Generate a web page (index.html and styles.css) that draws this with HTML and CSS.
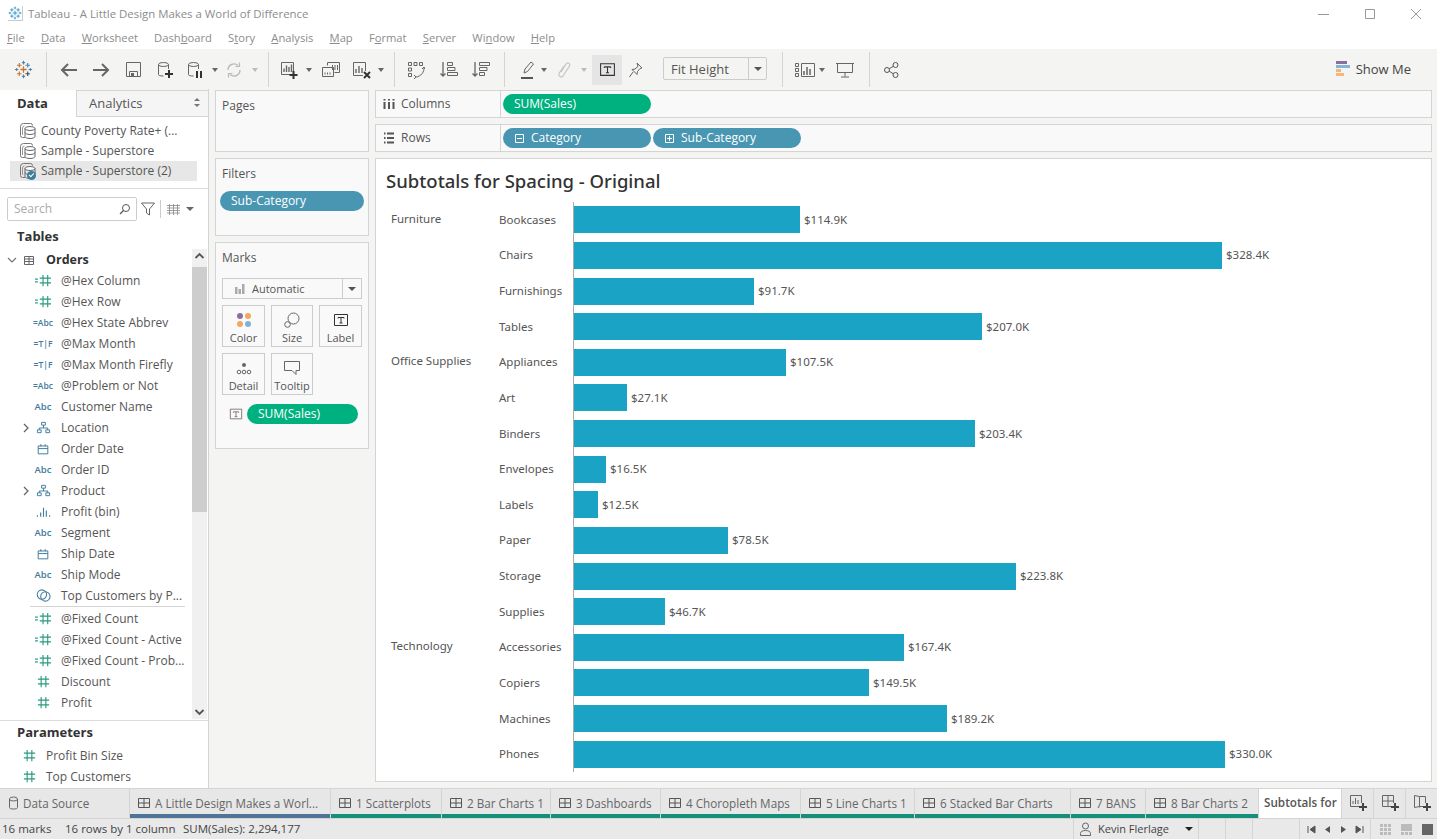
FILE: index.html
```html
<!DOCTYPE html>
<html lang="en">
<head>
<meta charset="utf-8">
<title>Tableau - A Little Design Makes a World of Difference</title>
<link rel="stylesheet" href="styles.css">
</head>
<body>
<svg class="sprite" xmlns="http://www.w3.org/2000/svg">
  <symbol id="hash" viewBox="0 0 16 16"><path d="M5.500 2v12M10.500 2v12M2 5.500h12M2 10.500h12" fill="none" stroke="#2a9a80" stroke-width="1.200"/></symbol>
  <symbol id="eqhash" viewBox="0 0 20 16"><path d="M9.500 2v12M14.500 2v12M6 5.500h12M6 10.500h12M1 6.500h3M1 9.500h3" fill="none" stroke="#2a9a80" stroke-width="1.200"/></symbol>
  <symbol id="cal" viewBox="0 0 16 16"><path d="M2.500 4.500h11v9h-11zM2.500 7.500h11M5.500 2.500v2.500M10.500 2.500v2.500" fill="none" stroke="#3e7a9b" stroke-width="1.100"/></symbol>
  <symbol id="hier" viewBox="0 0 16 16"><path d="M6 2.500h4v3H6zM1.500 10.500h4v3h-4zM10.500 10.500h4v3h-4zM8 5.500v3M3.500 10.500v-2h9v2" fill="none" stroke="#3e7a9b" stroke-width="1"/></symbol>
  <symbol id="bins" viewBox="0 0 16 16"><path d="M1.500 12v1.500M5 9v4.500M8 4v9.500M11 7v6.500M14.500 12v1.500" fill="none" stroke="#3e7a9b" stroke-width="1.200"/></symbol>
  <symbol id="set" viewBox="0 0 16 16"><circle cx="6.300" cy="7" r="5" fill="none" stroke="#3e7a9b" stroke-width="1.100"/><circle cx="10" cy="9" r="5" fill="none" stroke="#3e7a9b" stroke-width="1.100"/></symbol>
  <symbol id="chev" viewBox="0 0 8 10"><path d="M2 1l4 4-4 4" fill="none" stroke="#666" stroke-width="1.300"/></symbol>
  <symbol id="ds" viewBox="0 0 18 18"><path d="M6 15.500H3.500a2 2 0 01-2-2v-9a3 3 0 013-3h7a2 2 0 012 2" fill="none" stroke="#777"/><path d="M3.500 13V6a2 2 0 012-2" fill="none" stroke="#999"/><ellipse cx="11" cy="6.500" rx="5" ry="2" fill="#fff" stroke="#666"/><path d="M6 6.500v8c0 1 2 2 5 2s5-1 5-2v-8M6 10.500c0 1 2 2 5 2s5-1 5-2" fill="none" stroke="#666"/></symbol>
  <symbol id="tabg" viewBox="0 0 14 14"><path d="M1.500 2.500h11v9h-11zM7 2.500v9M1.500 7h11" fill="none" stroke="#555" stroke-width="1"/></symbol>
  <symbol id="logo" viewBox="0 0 18 18">
    <path d="M9 6v6M6 9h6" fill="none" stroke-width="1.200" stroke="var(--a)"/>
    <path d="M9 .8v3.400M7.500 2.500h3M9 13.800v3.400M7.500 15.500h3M.8 9h3.400M2.500 7.500v3M13.800 9h3.400M15.500 7.500v3" fill="none" stroke-width="1" stroke="var(--b)"/>
    <path d="M5 2.800v4.400M2.800 5h4.400" fill="none" stroke-width="1.100" stroke="var(--c)"/>
    <path d="M13 2.800v4.400M10.800 5h4.400" fill="none" stroke-width="1.100" stroke="var(--d)"/>
    <path d="M5 10.800v4.400M2.800 13h4.400" fill="none" stroke-width="1.100" stroke="var(--e)"/>
    <path d="M13 10.800v4.400M10.800 13h4.400" fill="none" stroke-width="1.100" stroke="var(--f)"/>
  </symbol>
  <symbol id="tbox" viewBox="0 0 16 16"><path d="M1.500 2.500h13v11h-13z" fill="none" stroke="currentColor"/><path d="M5 5.500h6M8 5.500v5.500M6.500 11h3M5 5.500v1M11 5.500v1" fill="none" stroke="currentColor"/></symbol>
</svg>

<header class="titlebar">
  <svg class="app-logo" width="15" height="15"><use href="#logo"/></svg>
  <span class="app-title">Tableau - A Little Design Makes a World of Difference</span>
  <div class="winctl">
    <svg width="12" height="12" viewBox="0 0 12 12"><path d="M0 6.500h11" stroke="#999"/></svg>
    <svg width="12" height="12" viewBox="0 0 12 12"><path d="M1.500 1.500h9v9h-9z" fill="none" stroke="#999"/></svg>
    <svg width="12" height="12" viewBox="0 0 12 12"><path d="M1 1l10 10M11 1L1 11" stroke="#999"/></svg>
  </div>
</header>

<nav class="menubar">
  <span><u>F</u>ile</span><span><u>D</u>ata</span><span><u>W</u>orksheet</span><span>Dash<u>b</u>oard</span><span>S<u>t</u>ory</span><span><u>A</u>nalysis</span><span><u>M</u>ap</span><span>F<u>o</u>rmat</span><span><u>S</u>erver</span><span>Wi<u>n</u>dow</span><span><u>H</u>elp</span>
</nav>

<div class="toolbar">
  <div class="tg g0"><div class="c w46"><svg class="color-logo" width="19" height="19"><use href="#logo"/></svg></div></div>
  <div class="tg g1">
    <div class="c w32"><svg width="18" height="16" viewBox="0 0 18 16"><path d="M17 8H2M8 2L2 8l6 6" fill="none" stroke="#666" stroke-width="2"/></svg></div>
    <div class="c w32"><svg width="18" height="16" viewBox="0 0 18 16"><path d="M1 8h15M10 2l6 6-6 6" fill="none" stroke="#666" stroke-width="2"/></svg></div>
    <div class="c w32"><svg width="17" height="17" viewBox="0 0 17 17"><path d="M1.500 1.500h14v14h-14zM4.500 15.500v-5h8v5" fill="none" stroke="#666"/><path d="M6 12h3v3H6z" fill="#666"/></svg></div>
    <div class="c w32"><svg width="17" height="18" viewBox="0 0 17 18"><path d="M1.500 3.500v10c0 1 1.500 1.500 5 1.500M11.500 3.500V8" fill="none" stroke="#666"/><ellipse cx="6.500" cy="3.500" rx="5" ry="2" fill="none" stroke="#666"/><path d="M12 9v8M8 13h8" stroke="#333" stroke-width="2"/></svg></div>
    <div class="c w28"><svg width="17" height="18" viewBox="0 0 17 18"><path d="M1.500 3.500v10c0 1 1.500 1.500 5 1.500M11.500 3.500V8" fill="none" stroke="#666"/><ellipse cx="6.500" cy="3.500" rx="5" ry="2" fill="none" stroke="#666"/><path d="M10 10v7M14 10v7" stroke="#333" stroke-width="2"/></svg></div>
    <div class="c w12"><i class="caret"></i></div>
    <div class="c w26"><svg width="18" height="18" viewBox="0 0 18 18"><path d="M3 9a6 6 0 0110-4.500M15 9a6 6 0 01-10 4.500" fill="none" stroke="#bbb" stroke-width="1.400"/><path d="M14.500 1.500v4h-4M3.500 16.500v-4h4" fill="none" stroke="#bbb" stroke-width="1.200"/></svg></div>
    <div class="c w16"><i class="caret light"></i></div>
  </div>
  <div class="tg g2">
    <div class="c w32"><svg width="19" height="18" viewBox="0 0 19 18"><path d="M12 13.500H1.500v-12h12V12" fill="none" stroke="#666"/><path d="M4 11V7.500M6.500 11V4.500M9 11V6M11.500 11V3.500" stroke="#666" stroke-width="1.400"/><path d="M13.500 10v8M9.500 14h8" stroke="#333" stroke-width="2"/></svg></div>
    <div class="c w8"><i class="caret"></i></div>
    <div class="c w36"><svg width="18" height="17" viewBox="0 0 18 17"><path d="M5.500 4.500v-3h12v10h-5" fill="none" stroke="#666"/><path d="M.5 6.500h11v9H.5z" fill="#f4f4f2" stroke="#666"/><path d="M3 13.500v-2M5.500 13.500v-2M8 13.500v-2M10.500 9V4M13 9V4M15.500 9V4" stroke="#666"/></svg></div>
    <div class="c w26"><svg width="20" height="18" viewBox="0 0 20 18"><path d="M11 14.500H1.500v-13h12V10" fill="none" stroke="#666"/><path d="M4 12V8M7 12V5M10 12V7" stroke="#666" stroke-width="1.400"/><path d="M12 11l6 6M18 11l-6 6" stroke="#333" stroke-width="2"/></svg></div>
    <div class="c w12"><i class="caret"></i></div>
  </div>
  <div class="tg g3">
    <div class="c w32"><svg width="18" height="18" viewBox="0 0 18 18"><path d="M1.500 1.500h3v3h-3zM7 1.500h3v3H7zM12.500 1.500h3v3h-3zM1.500 7h3v3h-3zM1.500 12.500h3v3h-3z" fill="none" stroke="#666"/><path d="M17 6c.5 5-3 9.500-8 10M7 14l2 2-2 2M15 8l2-2 1 2" fill="none" stroke="#666"/></svg></div>
    <div class="c w34"><svg width="18" height="17" viewBox="0 0 18 17"><path d="M3 1v14M.5 12.500L3 15l2.500-2.500" fill="none" stroke="#666" stroke-width="1.300"/><path d="M7.500 1.500h5v3h-5zM7.500 6.500H15v3H7.500zM7.500 11.500h10v3h-10z" fill="none" stroke="#666"/></svg></div>
    <div class="c w30"><svg width="18" height="17" viewBox="0 0 18 17"><path d="M3 1v14M.5 12.500L3 15l2.500-2.500" fill="none" stroke="#666" stroke-width="1.300"/><path d="M7.500 1.500h10v3h-10zM7.500 6.500H15v3H7.500zM7.500 11.500h5v3h-5z" fill="none" stroke="#666"/></svg></div>
  </div>
  <div class="tg g4">
    <div class="c w26"><svg width="13" height="18" viewBox="0 0 13 18"><path d="M3 12l1-4 6-7 2.500 2-6 7.500z" fill="none" stroke="#666"/><path d="M0 17h12" stroke="#555" stroke-width="2"/></svg></div>
    <div class="c w8"><i class="caret"></i></div>
    <div class="c w32"><svg width="13" height="18" viewBox="0 0 13 18"><path d="M3 11l5-8a2 2 0 013.500 2l-6.500 10a2.400 2.400 0 01-4-2.500L6 5" fill="none" stroke="#c4c4c4" stroke-width="1.200"/></svg></div>
    <div class="c w8"><i class="caret light"></i></div>
    <div class="c w30 sel gapl"><svg class="t-ink" width="17" height="17"><use href="#tbox"/></svg></div>
    <div class="c w28"><svg width="14" height="16" viewBox="0 0 14 16"><path d="M8 1l5 5-2 .5-2.500 3-.5 3-5-5 3-.5 3-2.500zM4 10L.5 15" fill="none" stroke="#666"/></svg></div>
    <div class="fit"><span class="fit-label">Fit Height</span><span class="fit-btn"><i class="caret dark"></i></span></div>
  </div>
  <div class="tg g5">
    <div class="c w24"><svg width="20" height="16" viewBox="0 0 20 16"><path d="M.5 1.500h3v3h-3zM.5 6.500h3v3h-3zM.5 11.500h3v3h-3zM6.500 1.500h13v13h-13z" fill="none" stroke="#666"/><path d="M9 13V9M12 13V5M15 13V7" stroke="#666" stroke-width="1.500"/></svg></div>
    <div class="c w10"><i class="caret"></i></div>
    <div class="c w35"><svg width="18" height="16" viewBox="0 0 18 16"><path d="M0 1.500h18M1.500 1.500v9h15v-9M9 10.500v4M5 15h8" fill="none" stroke="#666"/></svg></div>
  </div>
  <div class="tg g6">
    <div class="c w42"><svg width="15" height="16" viewBox="0 0 15 16"><circle cx="3" cy="8" r="2.500" fill="none" stroke="#555"/><circle cx="11.500" cy="3" r="2.500" fill="none" stroke="#555"/><circle cx="11.500" cy="13" r="2.500" fill="none" stroke="#555"/><path d="M5.200 6.800l4-2.500M5.200 9.200l4 2.500" stroke="#555"/></svg></div>
  </div>
  <div class="showme">
    <svg width="14" height="15" viewBox="0 0 14 15"><path d="M0 0h11v3H0z" fill="#8a6f9e"/><path d="M0 4h14v3H0z" fill="#86b3d9"/><path d="M0 8h5v3H0z" fill="#f5b67a"/><path d="M0 12h8v3H0z" fill="#f5b67a"/></svg>
    <span>Show Me</span>
  </div>
</div>

<main class="main">
  <aside class="left">
    <div class="left-tabs"><div class="ltab on">Data</div><div class="ltab"><span>Analytics</span><i class="updown"></i></div></div>
    <div class="sources">
      <div class="src"><svg width="18" height="18"><use href="#ds"/></svg><span>County Poverty Rate+ (...</span></div>
      <div class="src"><svg width="18" height="18"><use href="#ds"/></svg><span>Sample - Superstore</span></div>
      <div class="src active"><svg width="18" height="18"><use href="#ds"/></svg><b class="check"></b><span>Sample - Superstore (2)</span></div>
    </div>
    <div class="searchrow">
      <div class="search"><span>Search</span><svg width="12" height="12" viewBox="0 0 12 12"><circle cx="7" cy="5" r="3.500" fill="none" stroke="#555"/><path d="M4.500 7.500L1 11" stroke="#555" stroke-width="1.300"/></svg></div>
      <svg width="14" height="14" viewBox="0 0 14 14"><path d="M.5 1h13L8.500 7v6l-3-2V7z" fill="none" stroke="#666"/></svg>
      <i class="vsep"></i>
      <svg width="13" height="11" viewBox="0 0 13 11"><path d="M0 1.500h13M0 4h13M0 6.500h13M0 9h13M2.500 0v11M6.500 0v11M10.500 0v11" stroke="#888" stroke-width=".8"/></svg>
      <i class="caret mark"></i>
    </div>
    <div class="heading">Tables</div>
    <div class="fieldwrap">
      <div class="fields">
        <div class="row orders"><svg class="dn" width="10" height="8" viewBox="0 0 10 8"><path d="M1 2l4 4 4-4" fill="none" stroke="#777" stroke-width="1.200"/></svg><svg width="14" height="14" viewBox="0 0 14 14"><path d="M2.500 3.500h9v8h-9zM2.500 6h9M2.500 8.500h9M7 3.500v8" fill="none" stroke="#666"/></svg><span>Orders</span></div>
        <div class="row"><em class="ic"><svg width="19" height="15"><use href="#eqhash"/></svg></em><span>@Hex Column</span></div>
        <div class="row"><em class="ic"><svg width="19" height="15"><use href="#eqhash"/></svg></em><span>@Hex Row</span></div>
        <div class="row"><em class="ic txt tiny">=Abc</em><span>@Hex State Abbrev</span></div>
        <div class="row"><em class="ic txt tiny">=T|F</em><span>@Max Month</span></div>
        <div class="row"><em class="ic txt tiny">=T|F</em><span>@Max Month Firefly</span></div>
        <div class="row"><em class="ic txt tiny">=Abc</em><span>@Problem or Not</span></div>
        <div class="row"><em class="ic txt">Abc</em><span>Customer Name</span></div>
        <div class="row"><svg class="more" width="8" height="10"><use href="#chev"/></svg><em class="ic"><svg width="15" height="15"><use href="#hier"/></svg></em><span>Location</span></div>
        <div class="row"><em class="ic"><svg width="14" height="14"><use href="#cal"/></svg></em><span>Order Date</span></div>
        <div class="row"><em class="ic txt">Abc</em><span>Order ID</span></div>
        <div class="row"><svg class="more" width="8" height="10"><use href="#chev"/></svg><em class="ic"><svg width="15" height="15"><use href="#hier"/></svg></em><span>Product</span></div>
        <div class="row"><em class="ic"><svg width="15" height="15"><use href="#bins"/></svg></em><span>Profit (bin)</span></div>
        <div class="row"><em class="ic txt">Abc</em><span>Segment</span></div>
        <div class="row"><em class="ic"><svg width="14" height="14"><use href="#cal"/></svg></em><span>Ship Date</span></div>
        <div class="row"><em class="ic txt">Abc</em><span>Ship Mode</span></div>
        <div class="row"><em class="ic"><svg width="15" height="15"><use href="#set"/></svg></em><span>Top Customers by P...</span></div>
        <div class="rule"></div>
        <div class="row"><em class="ic"><svg width="19" height="15"><use href="#eqhash"/></svg></em><span>@Fixed Count</span></div>
        <div class="row"><em class="ic"><svg width="19" height="15"><use href="#eqhash"/></svg></em><span>@Fixed Count - Active</span></div>
        <div class="row"><em class="ic"><svg width="19" height="15"><use href="#eqhash"/></svg></em><span>@Fixed Count - Prob...</span></div>
        <div class="row"><em class="ic"><svg width="15" height="15"><use href="#hash"/></svg></em><span>Discount</span></div>
        <div class="row"><em class="ic"><svg width="15" height="15"><use href="#hash"/></svg></em><span>Profit</span></div>
      </div>
      <div class="scroll">
        <svg class="sb-arrow" width="15" height="15" viewBox="0 0 15 15"><path d="M3.500 9l4-4 4 4" fill="none" stroke="#555" stroke-width="1.800"/></svg>
        <div class="thumb"></div>
        <svg class="sb-arrow end" width="15" height="15" viewBox="0 0 15 15"><path d="M3.500 6l4 4 4-4" fill="none" stroke="#555" stroke-width="1.800"/></svg>
      </div>
    </div>
    <div class="params">
      <div class="heading p">Parameters</div>
      <div class="prow"><svg width="15" height="15"><use href="#hash"/></svg><span>Profit Bin Size</span></div>
      <div class="prow"><svg width="15" height="15"><use href="#hash"/></svg><span>Top Customers</span></div>
    </div>
  </aside>

  <section class="cards">
    <div class="card pages"><h3>Pages</h3></div>
    <div class="card filters"><h3>Filters</h3><div class="pill blue wide">Sub-Category</div></div>
    <div class="card marks">
      <h3>Marks</h3>
      <div class="marksel"><svg width="11" height="11" viewBox="0 0 11 11"><path d="M1 4h2.500v7H1zM4.500 6H7v5H4.500zM8 1h2.500v10H8z" fill="#aaa"/></svg><span>Automatic</span><b><i class="caret dark"></i></b></div>
      <div class="markgrid">
        <div class="mbtn"><svg width="16" height="16" viewBox="0 0 16 16"><circle cx="4" cy="4" r="3" fill="#8a6f9e"/><circle cx="12" cy="4" r="3" fill="#f0a860"/><circle cx="4" cy="12" r="3" fill="#f0a860"/><circle cx="12" cy="12" r="3" fill="#7fb0d8"/></svg><span>Color</span></div>
        <div class="mbtn"><svg width="16" height="16" viewBox="0 0 16 16"><circle cx="9.500" cy="6.500" r="5.500" fill="none" stroke="#666"/><circle cx="3.500" cy="12.500" r="2.800" fill="#f9f9f9" stroke="#666"/></svg><span>Size</span></div>
        <div class="mbtn"><svg class="t-ink" width="16" height="16"><use href="#tbox"/></svg><span>Label</span></div>
        <div class="mbtn"><svg width="16" height="16" viewBox="0 0 16 16"><circle cx="8" cy="5" r="2" fill="#666"/><circle cx="3" cy="12" r="1.800" fill="none" stroke="#666"/><circle cx="8" cy="12" r="1.800" fill="none" stroke="#666"/><circle cx="13" cy="12" r="1.800" fill="none" stroke="#666"/></svg><span>Detail</span></div>
        <div class="mbtn"><svg width="16" height="16" viewBox="0 0 16 16"><path d="M.5 1.500h15v9h-3.500v4l-4-4H.5z" fill="none" stroke="#666"/></svg><span>Tooltip</span></div>
      </div>
      <div class="markpill"><svg class="t-ink2" width="14" height="14"><use href="#tbox"/></svg><div class="pill green mp">SUM(Sales)</div></div>
    </div>
  </section>

  <section class="work">
    <div class="shelf"><div class="shelf-label"><svg width="12" height="12" viewBox="0 0 12 12"><path d="M1.500 4v7M6 4v7M10.500 4v7M1.500 1v1.500M6 1v1.500M10.500 1v1.500" stroke="#555" stroke-width="2"/></svg><span>Columns</span></div><div class="shelf-body"><div class="pill green">SUM(Sales)</div></div></div>
    <div class="shelf"><div class="shelf-label"><svg width="12" height="12" viewBox="0 0 12 12"><path d="M4 1.500h7M4 6h7M4 10.500h7M1 1.500h1.500M1 6h1.500M1 10.500h1.500" stroke="#555" stroke-width="2"/></svg><span>Rows</span></div><div class="shelf-body"><div class="pill blue"><svg width="11" height="11" viewBox="0 0 11 11"><path d="M1.500 1.500h8v8h-8zM3 5.500h5" fill="none" stroke="#fff"/></svg><span>Category</span></div><div class="pill blue"><svg width="11" height="11" viewBox="0 0 11 11"><path d="M1.500 1.500h8v8h-8zM3 5.500h5M5.500 3v5" fill="none" stroke="#fff"/></svg><span>Sub-Category</span></div></div></div>
    <div class="view">
      <h1>Subtotals for Spacing - Original</h1>
      <div class="chart">
        <div class="crow"><div class="cat">Furniture</div><div class="sub">Bookcases</div><div class="barcell"><div class="bar" style="width:226px"></div><span>$114.9K</span></div></div>
        <div class="crow"><div class="cat"></div><div class="sub">Chairs</div><div class="barcell"><div class="bar" style="width:648px"></div><span>$328.4K</span></div></div>
        <div class="crow"><div class="cat"></div><div class="sub">Furnishings</div><div class="barcell"><div class="bar" style="width:180px"></div><span>$91.7K</span></div></div>
        <div class="crow"><div class="cat"></div><div class="sub">Tables</div><div class="barcell"><div class="bar" style="width:408px"></div><span>$207.0K</span></div></div>
        <div class="crow"><div class="cat">Office Supplies</div><div class="sub">Appliances</div><div class="barcell"><div class="bar" style="width:212px"></div><span>$107.5K</span></div></div>
        <div class="crow"><div class="cat"></div><div class="sub">Art</div><div class="barcell"><div class="bar" style="width:53px"></div><span>$27.1K</span></div></div>
        <div class="crow"><div class="cat"></div><div class="sub">Binders</div><div class="barcell"><div class="bar" style="width:401px"></div><span>$203.4K</span></div></div>
        <div class="crow"><div class="cat"></div><div class="sub">Envelopes</div><div class="barcell"><div class="bar" style="width:32px"></div><span>$16.5K</span></div></div>
        <div class="crow"><div class="cat"></div><div class="sub">Labels</div><div class="barcell"><div class="bar" style="width:24px"></div><span>$12.5K</span></div></div>
        <div class="crow"><div class="cat"></div><div class="sub">Paper</div><div class="barcell"><div class="bar" style="width:154px"></div><span>$78.5K</span></div></div>
        <div class="crow"><div class="cat"></div><div class="sub">Storage</div><div class="barcell"><div class="bar" style="width:442px"></div><span>$223.8K</span></div></div>
        <div class="crow"><div class="cat"></div><div class="sub">Supplies</div><div class="barcell"><div class="bar" style="width:91px"></div><span>$46.7K</span></div></div>
        <div class="crow"><div class="cat">Technology</div><div class="sub">Accessories</div><div class="barcell"><div class="bar" style="width:330px"></div><span>$167.4K</span></div></div>
        <div class="crow"><div class="cat"></div><div class="sub">Copiers</div><div class="barcell"><div class="bar" style="width:295px"></div><span>$149.5K</span></div></div>
        <div class="crow"><div class="cat"></div><div class="sub">Machines</div><div class="barcell"><div class="bar" style="width:373px"></div><span>$189.2K</span></div></div>
        <div class="crow"><div class="cat"></div><div class="sub">Phones</div><div class="barcell"><div class="bar" style="width:651px"></div><span>$330.0K</span></div></div>
      </div>
    </div>
  </section>
</main>

<div class="tabs">
  <div class="tab ds"><svg width="11" height="14" viewBox="0 0 11 14"><path d="M1.500 3v8.500c0 1 1.500 1.500 4 1.500s4-.5 4-1.500V3" fill="none" stroke="#666"/><ellipse cx="5.500" cy="3" rx="4" ry="2" fill="none" stroke="#666"/></svg><span>Data Source</span></div>
  <div class="tab home"><svg width="14" height="14"><use href="#tabg"/></svg><span>A Little Design Makes a Worl...</span></div>
  <div class="tab g"><svg width="14" height="14"><use href="#tabg"/></svg><span>1 Scatterplots</span></div>
  <div class="tab g"><svg width="14" height="14"><use href="#tabg"/></svg><span>2 Bar Charts 1</span></div>
  <div class="tab g"><svg width="14" height="14"><use href="#tabg"/></svg><span>3 Dashboards</span></div>
  <div class="tab g"><svg width="14" height="14"><use href="#tabg"/></svg><span>4 Choropleth Maps</span></div>
  <div class="tab g"><svg width="14" height="14"><use href="#tabg"/></svg><span>5 Line Charts 1</span></div>
  <div class="tab g"><svg width="14" height="14"><use href="#tabg"/></svg><span>6 Stacked Bar Charts</span></div>
  <div class="tab g"><svg width="14" height="14"><use href="#tabg"/></svg><span>7 BANS</span></div>
  <div class="tab g"><svg width="14" height="14"><use href="#tabg"/></svg><span>8 Bar Charts 2</span></div>
  <div class="tab cur"><span>Subtotals for</span></div>
  <div class="tab add"><svg width="20" height="18" viewBox="0 0 20 18"><path d="M11 12.500H1.500v-11h11V9" fill="none" stroke="#666"/><path d="M4 10V7M6.500 10V4M9 10V6" stroke="#666"/><path d="M14 9v8M10 13h8" stroke="#444" stroke-width="2"/></svg></div>
  <div class="tab add"><svg width="20" height="18" viewBox="0 0 20 18"><path d="M11 12.500H1.500v-11h11V9M7 1.500v11M1.500 7h11" fill="none" stroke="#666"/><path d="M14 9v8M10 13h8" stroke="#444" stroke-width="2"/></svg></div>
  <div class="tab add"><svg width="20" height="18" viewBox="0 0 20 18"><path d="M10 12.500H6.500l-5 1v-12l5 1h6V9M6.500 2.500v11" fill="none" stroke="#666"/><path d="M14 9v8M10 13h8" stroke="#444" stroke-width="2"/></svg></div>
</div>

<footer class="status">
  <span class="s1">16 marks</span><span class="s2">16 rows by 1 column</span><span class="s3">SUM(Sales): 2,294,177</span>
  <div class="user"><svg width="13" height="14" viewBox="0 0 13 14"><circle cx="6.500" cy="4" r="3" fill="none" stroke="#666"/><path d="M1.500 13.500v-2c0-2 2-3 5-3s5 1 5 3v2z" fill="none" stroke="#666"/></svg><span>Kevin Flerlage</span><i class="caret black"></i></div>
  <div class="blank"></div><div class="blank"></div><div class="blank wide"></div>
  <div class="pager">
    <svg width="9" height="9" viewBox="0 0 9 9"><path d="M1 1v7M8 1v7L3 4.500z" fill="#555" stroke="#555"/></svg>
    <svg width="9" height="9" viewBox="0 0 9 9"><path d="M7 1v7L2 4.500z" fill="#555"/></svg>
    <svg width="9" height="9" viewBox="0 0 9 9"><path d="M2 1v7l5-3.500z" fill="#555"/></svg>
    <svg width="9" height="9" viewBox="0 0 9 9"><path d="M8 1v7M1 1v7l5-3.500z" fill="#555" stroke="#555"/></svg>
  </div>
  <div class="sizes">
    <svg width="11" height="11" viewBox="0 0 11 11"><path d="M0 0h3v3H0zM4 0h3v3H4zM8 0h3v3H8zM0 4h3v3H0zM4 4h3v3H4zM8 4h3v3H8zM0 8h3v3H0zM4 8h3v3H4zM8 8h3v3H8z" fill="#bbb"/></svg>
    <svg width="11" height="11" viewBox="0 0 11 11"><path d="M0 0h11v7H0zM0 8h3v3H0zM4 8h3v3H4zM8 8h3v3H8z" fill="#bbb"/></svg>
    <svg width="11" height="11" viewBox="0 0 11 11"><path d="M0 0h11v11H0z" fill="#666"/></svg>
  </div>
</footer>
</body>
</html>
```
FILE: styles.css
```css
* { box-sizing: border-box; }
html, body { margin: 0; padding: 0; }
body {
  width: 1437px; height: 839px; overflow: hidden;
  display: flex; flex-direction: column;
  font: 12px/16px "Open Sans", "Noto Sans", sans-serif;
  color: #555;
  background: #fff;
}
svg { display: block; flex: none; }
em { font-style: normal; }
.sprite { position: absolute; width: 0; height: 0; }

/* title */
.titlebar { height: 27px; flex: none; display: flex; align-items: center; padding-left: 8px; color: #8c8c8c; }
.app-logo { --a: #2f8fc8; --b: #2f8fc8; --c: #2f8fc8; --d: #2f8fc8; --e: #2f8fc8; --f: #2f8fc8; margin-right: 5px; border-right: 1px solid #ccc; border-bottom: 1px solid #ccc; }
.app-title { font-size: 11.400px; }
.winctl { margin-left: auto; display: flex; gap: 34px; padding-right: 15px; }
.menubar { height: 22px; flex: none; display: flex; align-items: center; padding-left: 7px; gap: 16.200px; color: #8c8c8c; font-size: 11.200px; }
.menubar u { text-underline-offset: 1px; }

/* toolbar */
.toolbar { height: 40px; flex: none; background: #f4f4f2; display: flex; align-items: center; padding-top: 1px; }
.tg { display: flex; align-items: center; height: 35px; border-right: 1px solid #d4d4d4; }
.g1 { padding: 0 5px 0 6px; }
.g2 { padding: 0 7px 0 4px; }
.g3 { padding: 0 8px 0 5px; }
.g4 { padding: 0 15px 0 9px; }
.g5 { padding: 0 7px 0 10px; }
.g6 { border-right: 0; }
.c { height: 30px; display: flex; align-items: center; justify-content: center; flex: none; }
.w8 { width: 8px; } .w10 { width: 10px; } .w12 { width: 12px; } .w16 { width: 16px; }
.w24 { width: 24px; } .w26 { width: 26px; } .w28 { width: 28px; } .w30 { width: 30px; }
.w32 { width: 32px; } .w34 { width: 34px; } .w35 { width: 35px; } .w36 { width: 36px; }
.w42 { width: 42px; } .w46 { width: 46px; }
.sel { background: #e5e5e5; }
.gapl { margin-left: 4px; }
.t-ink { color: #333; }
.t-ink2 { color: #7a6a6a; }
.color-logo { --a: #c9752e; --b: #4a86b8; --c: #c9752e; --d: #4a86b8; --e: #c9752e; --f: #3c4f63; }
.caret { display: block; flex: none; width: 0; height: 0; border: 3.500px solid transparent; border-top: 4px solid #666; border-bottom: 0; }
.caret.light { border-top-color: #bbb; }
.caret.dark { border-top-color: #555; border-width: 4px 4px 0; }
.caret.black { border-top-color: #222; border-width: 4.500px 4.500px 0; }
.caret.mark { margin-left: 6px; border-width: 4px 4px 0; }
.fit { margin: -2px 0 0 13px; width: 104px; height: 23px; border: 1px solid #ccc; border-radius: 2px; display: flex; align-items: center; font-size: 13px; color: #555; }
.fit-label { flex: 1; padding-left: 7px; }
.fit-btn { width: 18px; height: 100%; border-left: 1px solid #ccc; display: flex; align-items: center; justify-content: center; }
.showme { margin: -2px 0 0 auto; padding-right: 26px; display: flex; align-items: center; gap: 6px; font-size: 13px; color: #444; }

/* main */
.main { height: 699px; flex: none; display: flex; background: #f4f4f2; }
.left { width: 209px; flex: none; background: #fff; border-right: 1px solid #d4d4d4; display: flex; flex-direction: column; }
.left-tabs { height: 28px; flex: none; display: flex; background: #f4f4f2; padding-top: 1px; }
.ltab { flex: 1; display: flex; align-items: center; padding: 0 0 2px 12px; font-size: 13px; background: #f5f5f5; border: 1px solid #d4d4d4; border-right: 0; color: #555; }
.ltab.on { flex: 0 0 76px; background: #fff; border: 0; font-weight: 700; color: #333; padding-left: 17px; }
.updown { margin-left: auto; margin-right: 11px; width: 0; height: 9px; position: relative; }
.updown::before, .updown::after { content: ""; position: absolute; left: -3px; border: 3px solid transparent; }
.updown::before { top: 0; border-bottom: 3.500px solid #777; border-top: 0; }
.updown::after { bottom: 0; border-top: 3.500px solid #777; border-bottom: 0; }
.sources { height: 72px; flex: none; padding: 4px 11px 0 10px; border-bottom: 1px solid #dcdcdc; }
.src { height: 20px; display: flex; align-items: center; gap: 4px; padding-left: 9px; position: relative; }
.src.active { background: #e6e7e6; }
.check { position: absolute; left: 17px; top: 10px; width: 9px; height: 9px; border-radius: 50%; background: #3b7ea1; }
.check::after { content: ""; position: absolute; left: 2px; top: 2px; width: 4px; height: 2px; border-left: 1px solid #fff; border-bottom: 1px solid #fff; transform: rotate(-45deg); }
.searchrow { height: 36px; flex: none; display: flex; align-items: center; padding-left: 7px; padding-top: 4px; }
.search { width: 130px; height: 24px; border: 1px solid #ccc; border-radius: 2px; display: flex; align-items: center; justify-content: space-between; padding: 0 5px 0 6px; color: #aaa; margin-right: 4px; }
.vsep { width: 1px; height: 18px; background: #ccc; margin: 0 6px 0 5px; }
.heading { height: 24px; flex: none; padding-left: 17px; font-weight: 700; font-size: 13px; color: #333; line-height: 22px; }
.fieldwrap { height: 470px; flex: none; display: flex; }
.fields { flex: 1; min-width: 0; }
.row { height: 21px; display: flex; align-items: center; position: relative; padding-left: 61px; white-space: nowrap; }
.row .ic { position: absolute; left: 31px; width: 24px; height: 21px; display: flex; align-items: center; justify-content: center; }
.row .ic.txt { color: #3e7a9b; font-size: 9.500px; font-weight: 600; }
.row .ic.tiny { font-size: 8.500px; }
.row .more { position: absolute; left: 22px; top: 6px; }
.orders { padding-left: 7px; font-weight: 700; color: #333; font-size: 12.500px; }
.orders .dn { margin-right: 5px; }
.orders svg + svg { margin-right: 10px; }
.rule { height: 1px; margin: 0 7px 1px 30px; background: #d4d4d4; }
.scroll { width: 15px; flex: none; background: #f0f0f0; display: flex; flex-direction: column; margin-right: 1px; }
.thumb { height: 245px; background: #cdcdcd; margin-top: 3px; }
.sb-arrow.end { margin-top: auto; }
.params { flex: 1; border-top: 1px solid #dcdcdc; margin-top: 1px; min-height: 0; }
.heading.p { height: 24px; }
.prow { height: 21px; display: flex; align-items: center; gap: 9px; padding-left: 22px; }

/* cards */
.cards { width: 154px; flex: none; margin: 1px 0 0 6px; display: flex; flex-direction: column; gap: 6px; }
.card { background: #f9f9f9; border: 1px solid #d4d4d4; padding: 0 6px; flex: none; }
.card h3 { margin: 0; font-size: 12px; font-weight: 400; line-height: 16px; padding-top: 7px; }
.pages { height: 62px; }
.filters { height: 78px; }
.marks { height: 207px; }
.pill { height: 20px; border-radius: 10px; width: 148px; color: #fff; display: flex; align-items: center; gap: 6px; padding-left: 11px; font-size: 12px; flex: none; }
.pill.green { background: #00b180; }
.pill.blue { background: #4996b2; }
.pill.wide { width: 144px; margin: 9px 0 0 -2px; }
.marksel { margin-top: 12px; height: 21px; border: 1px solid #ccc; display: flex; align-items: center; padding-left: 11px; gap: 7px; font-size: 11px; width: 140px; }
.marksel b { margin-left: auto; width: 19px; height: 100%; border-left: 1px solid #ccc; display: flex; align-items: center; justify-content: center; }
.markgrid { margin-top: 6px; display: grid; grid-template-columns: 43px 42px 43px; gap: 6px; }
.mbtn { height: 42px; border: 1px solid #ccc; display: flex; flex-direction: column; align-items: center; padding-top: 6px; font-size: 11px; line-height: 14px; gap: 3px; color: #555; }
.markpill { margin-top: 9px; display: flex; align-items: center; gap: 4px; padding-left: 7px; }
.mp { width: 111px; }

/* work */
.work { flex: none; width: 1057px; margin: 1px 0 0 6px; display: flex; flex-direction: column; gap: 6px; }
.shelf { height: 28px; flex: none; background: #f9f9f9; border: 1px solid #d4d4d4; display: flex; }
.shelf-label { width: 125px; flex: none; border-right: 1px solid #d4d4d4; display: flex; align-items: center; gap: 6px; padding-left: 7px; }
.shelf-body { display: flex; align-items: center; gap: 2px; padding-left: 2px; }
.view { height: 624px; flex: none; background: #fff; border: 1px solid #d4d4d4; display: flex; flex-direction: column; padding-left: 15px; }
.view h1 { margin: 0 0 0 -5px; height: 43px; font-size: 18.500px; font-weight: 500; line-height: 44px; color: #333; font-family: "Noto Sans", sans-serif; }
.chart { height: 570px; flex: none; display: flex; flex-direction: column; font-family: "Noto Sans", sans-serif; font-size: 11.500px; }
.crow { flex: 1; display: grid; grid-template-columns: 108px 74px 1fr; align-items: center; }
.cat { margin-top: -2px; }
.barcell { height: 100%; border-left: 1px solid #aaa; display: flex; align-items: center; gap: 4px; }
.bar { height: 27px; background: #1ba3c6; flex: none; }

/* tabs */
.tabs { height: 31px; flex: none; display: flex; background: #e6e7e6; border-top: 1px solid #d4d4d4; border-bottom: 1px solid #d4d4d4; font-size: 11.700px; }
.tab { display: flex; align-items: center; gap: 4px; padding: 0 0 2px 7px; height: 29px; flex: none; border-right: 1px solid #d4d4d4; white-space: nowrap; color: #666; }
.tab:nth-child(1) { width: 130px; }
.tab:nth-child(2) { width: 201px; }
.tab:nth-child(3) { width: 111px; }
.tab:nth-child(4) { width: 109px; }
.tab:nth-child(5) { width: 110px; }
.tab:nth-child(6) { width: 140px; }
.tab:nth-child(7) { width: 114px; }
.tab:nth-child(8) { width: 156px; }
.tab:nth-child(9) { width: 75px; }
.tab:nth-child(10) { width: 113px; }
.tab:nth-child(11) { width: 83px; }
.tab:nth-child(n+12) { width: 32px; padding-left: 7px; }
.tab.ds { padding-left: 8px; }
.tab.home { box-shadow: inset 0 -4px 0 #4e7599; }
.tab.g { box-shadow: inset 0 -4px 0 #14907a; }
.tab.cur { background: #fff; font-weight: 600; color: #555; padding-left: 5px; padding-bottom: 3px; }

/* status */
.status { height: 20px; flex: none; background: #e9e9e9; display: flex; align-items: center; font-size: 11.500px; color: #444; white-space: nowrap; }
.s1 { margin-left: 2px; width: 63px; }
.s2 { width: 118px; }
.s3 { width: 890px; }
.user { width: 126px; height: 100%; display: flex; align-items: center; border-left: 1px solid #d4d4d4; border-right: 1px solid #d4d4d4; padding: 0 5px; gap: 6px; font-size: 11px; }
.user .caret { margin-left: auto; }
.blank { width: 27px; height: 100%; border-right: 1px solid #d4d4d4; }
.blank.wide { width: 47px; }
.pager { width: 71px; height: 100%; display: flex; align-items: center; gap: 7px; padding-left: 7px; border-right: 1px solid #d4d4d4; }
.sizes { flex: 1; display: flex; gap: 10px; padding-left: 9px; }
```
